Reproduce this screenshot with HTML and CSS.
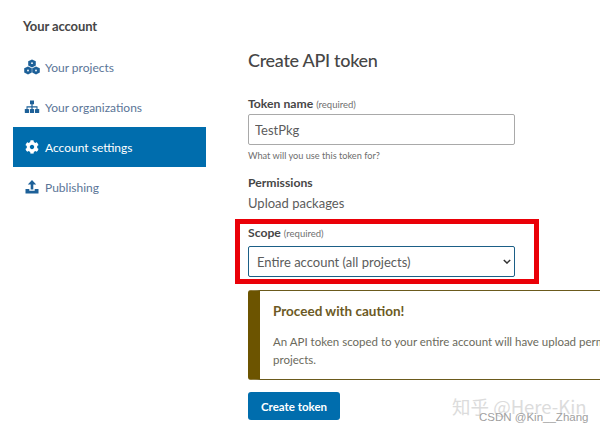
FILE: index.html
```html
<!DOCTYPE html>
<html lang="en">
<head>
    <meta charset="UTF-8">
    <title>Create API token</title>
    <link rel="stylesheet" href="styles.css">
</head>
<body>
    <div class="page">
        <!-- Sidebar -->
        <nav class="sidebar">
            <h3 class="sidebar-title">Your account</h3>
            <a class="nav-item">
                <svg class="nav-icon" viewBox="0 0 16 16"><path d="M8 .4 11.800 2.200V6.600L8 8.400 4.200 6.600V2.200z"/><path d="M4 7.400 7.800 9.200V13.600L4 15.400 .2 13.600V9.200z"/><path d="M12 7.400 15.800 9.200V13.600L12 15.400 8.200 13.600V9.200z"/><circle cx="8" cy="4.200" r=".9" fill="#fff"/><circle cx="4" cy="11.500" r=".9" fill="#fff"/><circle cx="12" cy="11.500" r=".9" fill="#fff"/></svg>
                <span>Your projects</span>
            </a>
            <a class="nav-item">
                <svg class="nav-icon" viewBox="0 0 16 16"><path d="M6 1.500h4v3.800H8.600V7.300H13.500V10H12.500V8.500H8.600V10H7.400V8.500H3.500V10H2.500V7.300H7.400V5.300H6z"/><rect x=".8" y="10" width="4.200" height="4" rx=".6"/><rect x="5.900" y="10" width="4.200" height="4" rx=".6"/><rect x="11" y="10" width="4.200" height="4" rx=".6"/></svg>
                <span>Your organizations</span>
            </a>
            <a class="nav-item active">
                <svg class="nav-icon" viewBox="0 0 512 512"><path d="M487.400 315.700l-42.600-24.600c4.300-23.200 4.300-47 0-70.200l42.600-24.600c4.900-2.800 7.100-8.600 5.500-14-11.100-35.600-30-67.800-54.700-94.600-3.800-4.100-10-5.100-14.800-2.300L380.800 110c-17.900-15.400-38.500-27.300-60.800-35.100V25.800c0-5.600-3.900-10.500-9.400-11.700-36.700-8.200-74.300-7.800-109.200 0-5.500 1.200-9.400 6.100-9.400 11.700V75c-22.200 7.900-42.800 19.800-60.800 35.100L88.700 85.500c-4.900-2.800-11-1.900-14.800 2.300-24.700 26.700-43.600 58.900-54.700 94.600-1.700 5.400.6 11.200 5.500 14L67.300 221c-4.300 23.200-4.300 47 0 70.200l-42.600 24.600c-4.900 2.800-7.100 8.600-5.500 14 11.100 35.600 30 67.800 54.700 94.600 3.800 4.100 10 5.100 14.800 2.300l42.600-24.600c17.900 15.400 38.500 27.300 60.800 35.100v49.200c0 5.600 3.900 10.500 9.400 11.700 36.700 8.200 74.300 7.800 109.200 0 5.500-1.200 9.400-6.100 9.400-11.700v-49.200c22.200-7.900 42.800-19.800 60.800-35.100l42.600 24.600c4.900 2.800 11 1.900 14.800-2.300 24.700-26.700 43.600-58.900 54.700-94.600 1.500-5.500-.7-11.300-5.600-14.100zM256 336c-44.100 0-80-35.900-80-80s35.900-80 80-80 80 35.900 80 80-35.900 80-80 80z"/></svg>
                <span>Account settings</span>
            </a>
            <a class="nav-item">
                <svg class="nav-icon" viewBox="0 0 16 16"><path d="M8 1 12.200 5.400H9.300V10.500H6.700V5.400H3.800z"/><path d="M1.500 10H5.300V11.800H10.700V10H14.500V14.500H1.500z"/></svg>
                <span>Publishing</span>
            </a>
        </nav>

        <!-- Main form -->
        <main class="content">
            <h1 class="page-title">Create API token</h1>

            <label class="field-label">Token name <span class="required">(required)</span></label>
            <input class="text-input" type="text" value="TestPkg">
            <p class="help-text">What will you use this token for?</p>

            <div class="field-label permissions-label">Permissions</div>
            <p class="permissions-value">Upload packages</p>

            <label class="field-label scope-label">Scope <span class="required">(required)</span></label>
            <div class="select-box">
                <span>Entire account (all projects)</span>
                <svg class="select-arrow" viewBox="0 0 10 6"><path d="M1 1 5 5 9 1"/></svg>
            </div>

            <div class="caution">
                <h3 class="caution-title">Proceed with caution!</h3>
                <p class="caution-text">An API token scoped to your entire account will have upload permissions for all of your projects.</p>
            </div>

            <button class="create-button">Create token</button>
        </main>
    </div>

    <!-- Annotation and watermarks on top of the screenshot -->
    <div class="red-box"></div>
    <div class="watermark">知乎 @Here-Kin</div>
    <div class="watermark-csdn">CSDN @Kin__Zhang</div>
</body>
</html>
```

FILE: styles.css
```css
html, body {
    margin: 0;
    height: 100%;
    overflow: hidden;
    background: #fff;
}

body {
    position: relative;
    font-family: "Lato", "Noto Sans", sans-serif;
    color: #464646;
}

.page {
    display: flex;
    width: 800px;
    padding: 0 0 0 13px;
}

/* Sidebar */
.sidebar {
    width: 193px;
    flex-shrink: 0;
    padding-top: 18px;
}

.sidebar-title {
    margin: 0 0 13px 10px;
    font-size: 13px;
    line-height: 16px;
    font-weight: 700;
    letter-spacing: -0.1px;
    color: #464646;
}

.nav-item {
    display: flex;
    align-items: center;
    gap: 5px;
    height: 40px;
    padding-left: 11px;
    font-size: 12px;
    color: #5b7597;
}

.nav-icon {
    width: 16px;
    height: 16px;
    flex-shrink: 0;
    fill: #1d6098;
}

.nav-item.active {
    background: #006dad;
    color: #fff;
}

.nav-item.active .nav-icon {
    fill: #fff;
    width: 14px;
    height: 14px;
    margin: 0 1px;
}

/* Form */
.content {
    width: 352px;
    margin-left: 42px;
    padding-top: 49px;
}

.page-title {
    margin: 0 0 25px;
    font-size: 18px;
    line-height: 22px;
    font-weight: 500;
    letter-spacing: -0.3px;
    color: #464646;
}

.field-label {
    display: block;
    font-size: 12.200px;
    line-height: 16px;
    font-weight: 700;
    color: #464646;
}

.required {
    font-size: 9.500px;
    font-weight: 400;
    color: #707070;
}

.text-input {
    display: block;
    box-sizing: border-box;
    width: 267px;
    height: 31px;
    margin-top: 1px;
    padding: 0 6px;
    border: 1px solid #a9a9a9;
    border-radius: 2px;
    font-family: inherit;
    font-size: 13px;
    color: #5c5c5c;
}

.help-text {
    margin: 4px 0 0;
    font-size: 9.200px;
    line-height: 14px;
    color: #6e6e6e;
}

.permissions-label {
    margin-top: 12px;
}

.permissions-value {
    margin: 3px 0 0;
    font-size: 13px;
    line-height: 18px;
    color: #5c5c5c;
}

.scope-label {
    margin-top: 13px;
}

.select-box {
    display: flex;
    align-items: center;
    justify-content: space-between;
    box-sizing: border-box;
    width: 267px;
    height: 31px;
    margin-top: 4px;
    padding: 0 3px 0 8px;
    border: 1px solid #1b5f87;
    border-radius: 2px;
    font-size: 13px;
    color: #5c5c5c;
}

.select-arrow {
    width: 8px;
    height: 5px;
    fill: none;
    stroke: #333;
    stroke-width: 1.800;
}

.caution {
    box-sizing: border-box;
    width: 490px;
    height: 90px;
    margin-top: 13px;
    padding: 11px 0 0 13px;
    border: 1px solid #6b5a1c;
    border-left: 12px solid #6c5400;
    border-radius: 3px;
}

.caution-title {
    margin: 0 0 13px;
    font-size: 13.500px;
    line-height: 18px;
    font-weight: 700;
    color: #6c5a24;
}

.caution-text {
    margin: 0;
    font-size: 11.500px;
    line-height: 18px;
    color: #6b6a5c;
}

.create-button {
    display: block;
    width: 92px;
    height: 28px;
    margin-top: 12px;
    padding: 0;
    border: none;
    border-radius: 3px;
    background: #006dad;
    font-family: inherit;
    font-size: 11.500px;
    font-weight: 700;
    color: #fff;
}

/* Overlays */
.red-box {
    position: absolute;
    left: 235px;
    top: 219px;
    width: 294px;
    height: 55px;
    border: 5px solid #ea0008;
}

.watermark {
    position: absolute;
    left: 452px;
    top: 395px;
    font-family: "Noto Sans CJK SC", "Noto Sans", sans-serif;
    font-size: 18.500px;
    line-height: 22px;
    color: #dcdcdc;
}

.watermark-csdn {
    position: absolute;
    left: 479px;
    top: 410px;
    font-family: "Liberation Sans", sans-serif;
    font-size: 11.500px;
    line-height: 14px;
    color: #a0a0a0;
}
```
